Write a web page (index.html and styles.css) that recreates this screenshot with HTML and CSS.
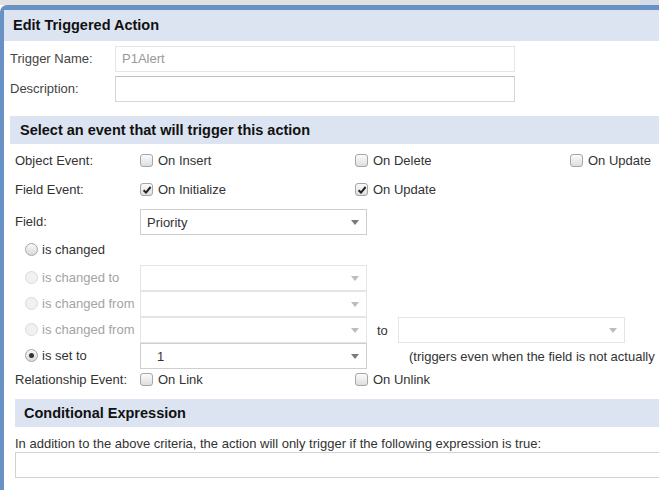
FILE: index.html
```html
<!DOCTYPE html>
<html>
<head>
<meta charset="utf-8">
<link rel="stylesheet" href="styles.css">
</head>
<body>
<div class="topbar"><div class="tab-edge"></div></div>
<div class="panel">
  <div class="panel-head">Edit Triggered Action</div>
  <div class="info">
    <div class="frow"><span class="flabel">Trigger Name:</span><div class="input ro">P1Alert</div></div>
    <div class="frow"><span class="flabel">Description:</span><div class="input desc"></div></div>
  </div>

  <div class="section">
    <div class="band">Select an event that will trigger this action</div>
    <div class="events">
      <div class="erow h29">
        <span class="elabel">Object Event:</span>
        <span class="opt w215"><span class="cb"></span>On Insert</span>
        <span class="opt w215"><span class="cb"></span>On Delete</span>
        <span class="opt"><span class="cb"></span>On Update</span>
      </div>
      <div class="erow h29">
        <span class="elabel">Field Event:</span>
        <span class="opt w215"><span class="cb on"><svg viewBox="0 0 10 10" width="10" height="10"><path d="M1.6 5.2 L4 7.6 L8.6 2" fill="none" stroke="#222" stroke-width="2"/></svg></span>On Initialize</span>
        <span class="opt"><span class="cb on"><svg viewBox="0 0 10 10" width="10" height="10"><path d="M1.6 5.2 L4 7.6 L8.6 2" fill="none" stroke="#222" stroke-width="2"/></svg></span>On Update</span>
      </div>
      <div class="erow field">
        <span class="elabel">Field:</span>
        <div class="sel"><span class="val">Priority</span><svg class="arr" viewBox="0 0 8 5" width="8" height="5"><path d="M0 0 H8 L4 5 Z" fill="#7a7a7a"/></svg></div>
      </div>
      <div class="erow h30">
        <span class="rlabel"><span class="rb"></span>is changed</span>
      </div>
      <div class="erow h26">
        <span class="rlabel dis"><span class="rb dis"></span>is changed to</span>
        <div class="sel dis"><span class="val"></span><svg class="arr" viewBox="0 0 8 5" width="8" height="5"><path d="M0 0 H8 L4 5 Z" fill="#bdbdbd"/></svg></div>
      </div>
      <div class="erow h26">
        <span class="rlabel dis"><span class="rb dis"></span>is changed from</span>
        <div class="sel dis"><span class="val"></span><svg class="arr" viewBox="0 0 8 5" width="8" height="5"><path d="M0 0 H8 L4 5 Z" fill="#bdbdbd"/></svg></div>
      </div>
      <div class="erow h26">
        <span class="rlabel dis"><span class="rb dis"></span>is changed from</span>
        <div class="sel dis"><span class="val"></span><svg class="arr" viewBox="0 0 8 5" width="8" height="5"><path d="M0 0 H8 L4 5 Z" fill="#bdbdbd"/></svg></div>
        <span class="to">to</span>
        <div class="sel dis"><span class="val"></span><svg class="arr" viewBox="0 0 8 5" width="8" height="5"><path d="M0 0 H8 L4 5 Z" fill="#bdbdbd"/></svg></div>
      </div>
      <div class="erow h26">
        <span class="rlabel"><span class="rb on"></span>is set to</span>
        <div class="sel"><span class="val num">1</span><svg class="arr" viewBox="0 0 8 5" width="8" height="5"><path d="M0 0 H8 L4 5 Z" fill="#7a7a7a"/></svg></div>
        <span class="note">(triggers even when the field is not actually</span>
      </div>
      <div class="erow h22">
        <span class="elabel">Relationship Event:</span>
        <span class="opt w215"><span class="cb"></span>On Link</span>
        <span class="opt"><span class="cb"></span>On Unlink</span>
      </div>
    </div>
  </div>

  <div class="section cond">
    <div class="band">Conditional Expression</div>
    <div class="cond-text">In addition to the above criteria, the action will only trigger if the following expression is true:</div>
    <div class="input expr"></div>
  </div>
</div>
</body>
</html>
```

FILE: styles.css
```css
html, body {
  margin: 0;
  overflow: hidden;
  background: #fff;
}
body {
  font-family: "Liberation Sans", Arial, sans-serif;
  font-size: 13px;
  color: #333;
}
.topbar {
  height: 5px;
  background: #e1e1e1;
  display: flex;
}
.tab-edge {
  margin-left: auto;
  width: 19px;
  background: #d4dce7;
}
.panel {
  width: 800px;
  height: 500px;
  border-top: 5px solid #6892c6;
  border-left: 4px solid #6892c6;
  border-top-left-radius: 7px;
  background: #fff;
}
.panel-head {
  height: 31px;
  line-height: 31px;
  background: #dbe4f0;
  padding-left: 9px;
  font-weight: bold;
  font-size: 14.5px;
  color: #111;
}
.info {
  padding: 5px 0 0 6px;
  display: flex;
  flex-direction: column;
  gap: 4px;
}
.frow {
  display: flex;
  align-items: center;
  height: 26px;
}
.flabel {
  width: 105px;
  color: #444;
  position: relative;
  top: -1px;
}
.input {
  box-sizing: border-box;
  width: 400px;
  height: 26px;
  border: 1px solid #d6d6d6;
  padding-left: 6px;
  line-height: 24px;
  background: #fff;
}
.input.ro {
  border-color: #e6e6e6;
  color: #999;
}
.input.desc {
  border-top-color: #bdbdbd;
}
.section {
  margin: 14px 0 0 6px;
}
.band {
  height: 28px;
  line-height: 28px;
  background: #dbe4f0;
  padding-left: 10px;
  font-weight: bold;
  font-size: 14.5px;
  color: #111;
}
.events {
  padding: 3px 0 0 5px;
}
.erow {
  display: flex;
  align-items: center;
  white-space: nowrap;
}
.h29 { height: 29px; }
.h30 { height: 30px; }
.h26 { height: 26px; }
.h22 { height: 22px; }
.erow.field {
  height: 26px;
  margin-top: 4px;
}
.elabel {
  width: 125px;
  flex: none;
  color: #333;
  position: relative;
  top: -1px;
}
.opt {
  display: flex;
  align-items: center;
  color: #333;
  position: relative;
  top: -1px;
}
.w215 {
  width: 215px;
  flex: none;
}
.cb {
  box-sizing: border-box;
  width: 13px;
  height: 13px;
  margin-right: 5px;
  border: 1px solid #a6a6a6;
  border-radius: 3px;
  background: linear-gradient(#fbfbfb, #dedede);
  display: flex;
  align-items: center;
  justify-content: center;
}
.rlabel {
  width: 115px;
  flex: none;
  padding-left: 10px;
  display: flex;
  align-items: center;
  color: #333;
  position: relative;
  top: -1px;
}
.rlabel.dis {
  color: #a3a3a3;
}
.rb {
  box-sizing: border-box;
  width: 13px;
  height: 13px;
  margin-right: 4px;
  border: 1px solid #a6a6a6;
  border-radius: 50%;
  background: linear-gradient(#f8f8f8, #d9d9d9);
  display: flex;
  align-items: center;
  justify-content: center;
}
.rb.dis {
  border-color: #dadada;
  background: #f1f1f1;
}
.rb.on::after {
  content: "";
  width: 5px;
  height: 5px;
  border-radius: 50%;
  background: #333;
}
.sel {
  box-sizing: border-box;
  width: 227px;
  height: 26px;
  flex: none;
  border: 1px solid #cfcfcf;
  display: flex;
  align-items: center;
  justify-content: space-between;
  padding: 0 7px 0 6px;
  background: #fff;
  color: #333;
}
.sel.dis {
  border-color: #e4e4e4;
}
.val.num {
  padding-left: 10px;
}
.arr {
  flex: none;
}
.to {
  width: 31px;
  flex: none;
  padding-left: 10px;
  box-sizing: border-box;
  color: #333;
}
.note {
  margin-left: 42px;
  color: #333;
}
.cond {
  margin: 8px 0 0 11px;
}
.cond .band {
  padding-left: 9px;
}
.cond-text {
  padding-top: 9px;
  height: 16px;
  line-height: 16px;
  color: #333;
}
.input.expr {
  width: 800px;
  border-color: #d2d2d2;
}
```
